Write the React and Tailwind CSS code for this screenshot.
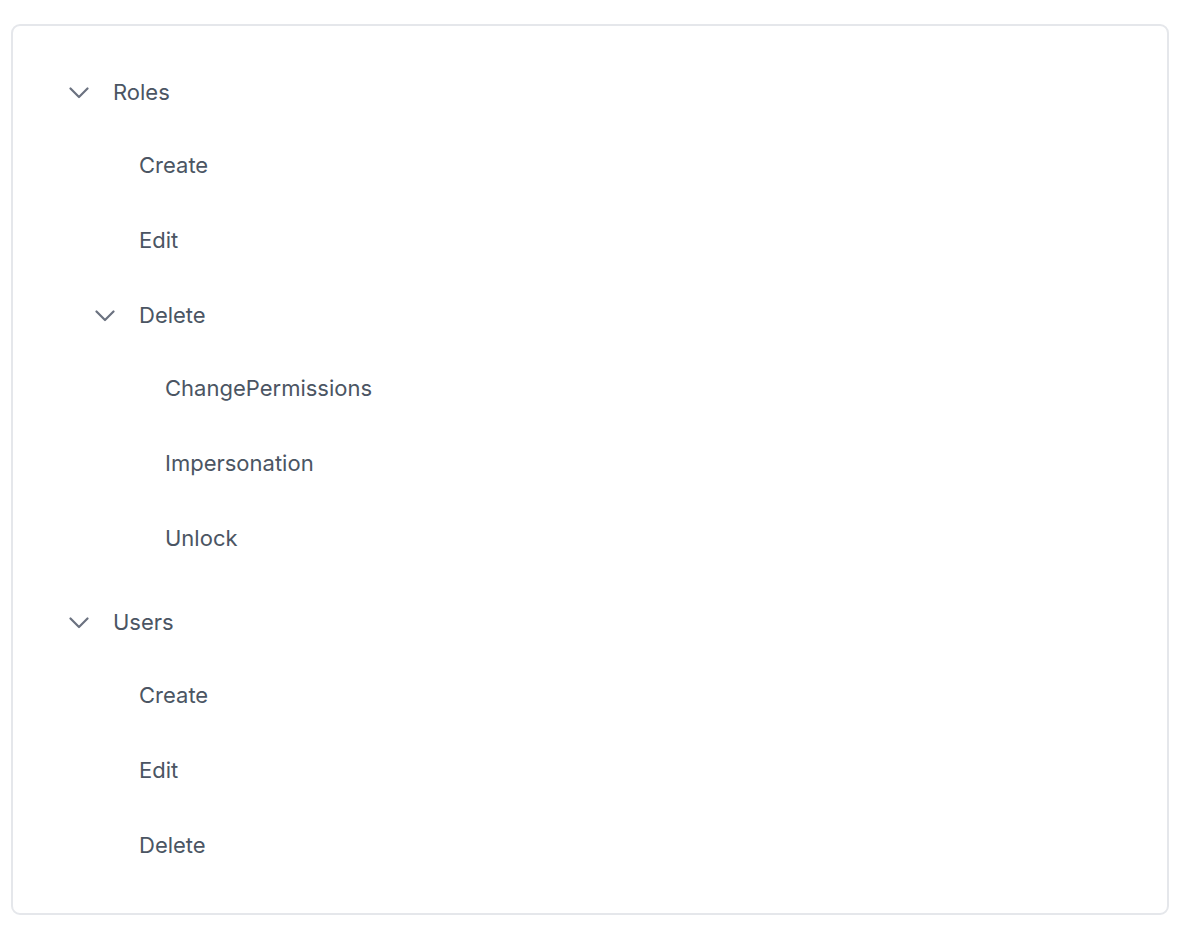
const tree = [
  {
    label: 'Roles',
    children: [
      { label: 'Create' },
      { label: 'Edit' },
      {
        label: 'Delete',
        children: [
          { label: 'ChangePermissions' },
          { label: 'Impersonation' },
          { label: 'Unlock' },
        ],
      },
    ],
  },
  {
    label: 'Users',
    children: [{ label: 'Create' }, { label: 'Edit' }, { label: 'Delete' }],
  },
];

function Chevron() {
  return (
    <svg width="20" height="12" viewBox="0 0 20 12" fill="none" className="shrink-0 text-[#6b7280]">
      <path d="M1.5 1.5 L10 10 L18.5 1.5" stroke="currentColor" strokeWidth="2.2" strokeLinecap="round" strokeLinejoin="round" />
    </svg>
  );
}

function Node({ node, depth }) {
  const hasKids = node.children && node.children.length > 0;
  return (
    <li>
      <div
        className="flex h-[75px] items-center"
        style={{ paddingLeft: depth * 26 }}
      >
        {hasKids ? (
          <div className="flex w-[44px] items-center">
            <Chevron />
          </div>
        ) : (
          <div className="w-[44px]" />
        )}
        <span className="text-[22px] text-[#4b5563]">{node.label}</span>
      </div>
      {hasKids && (
        <ul className="-mt-[2px]">
          {node.children.map((c, i) => (
            <Node key={i} node={c} depth={depth + 1} />
          ))}
        </ul>
      )}
    </li>
  );
}

export default function App() {
  return (
    <div className="min-h-screen bg-white pl-[11px] pt-[24px] font-['Inter',sans-serif]">
      <div className="h-[891px] w-[1158px] rounded-[9px] border-2 border-[#e5e7eb] pl-[56px] pt-[29px]">
        <ul className="flex flex-col gap-[9px]">
          {tree.map((n, i) => (
            <Node key={i} node={n} depth={0} />
          ))}
        </ul>
      </div>
    </div>
  );
}
